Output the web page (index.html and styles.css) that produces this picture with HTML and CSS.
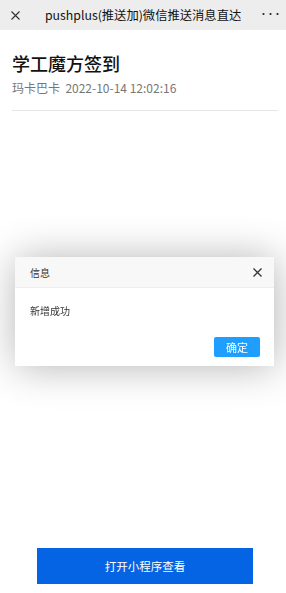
FILE: index.html
```html
<!DOCTYPE html>
<html lang="zh">
<head>
<meta charset="utf-8">
<title>pushplus</title>
<link rel="stylesheet" href="styles.css">
</head>
<body>
<div class="page">
  <header class="topbar">
    <svg class="close-icon" width="9" height="9" viewBox="0 0 9 9"><path d="M0.5 0.5L8.5 8.5M8.5 0.5L0.5 8.5" stroke="#333" stroke-width="1.1" fill="none"/></svg>
    <div class="topbar-title">pushplus(推送加)微信推送消息直达</div>
    <svg class="more-icon" width="17" height="4" viewBox="0 0 17 4"><circle cx="1.5" cy="2" r="1.1" fill="#222"/><circle cx="8.5" cy="2" r="1.1" fill="#222"/><circle cx="15.5" cy="2" r="1.1" fill="#222"/></svg>
  </header>
  <main class="article">
    <h1 class="article-title">学工魔方签到</h1>
    <div class="article-meta">玛卡巴卡&nbsp;&nbsp;2022-10-14 12:02:16</div>
    <hr class="divider">
  </main>
  <button class="open-btn">打开小程序查看</button>
</div>

<div class="layer">
  <div class="layer-head">
    <span class="layer-title">信息</span>
    <svg class="layer-close" width="9" height="9" viewBox="0 0 9 9"><path d="M0.5 0.5L8.5 8.5M8.5 0.5L0.5 8.5" stroke="#333" stroke-width="1.3" fill="none"/></svg>
  </div>
  <div class="layer-body">新增成功</div>
  <div class="layer-actions"><span class="layer-btn">确定</span></div>
</div>
</body>
</html>
```

FILE: styles.css
```css
html, body {
  margin: 0;
  padding: 0;
  background: #fff;
}
body {
  font-family: "Noto Sans CJK SC", "Noto Sans", sans-serif;
  color: #111;
}
.page {
  height: 593px;
  display: flex;
  flex-direction: column;
}
.topbar {
  height: 30px;
  background: #ededed;
  display: flex;
  align-items: center;
  padding: 0 7px 0 11px;
  flex-shrink: 0;
}
.close-icon {
  display: block;
}
.topbar-title {
  flex: 1;
  margin-left: 25px;
  font-size: 12.3px;
  line-height: 16px;
  color: #111;
  white-space: nowrap;
}
.more-icon {
  display: block;
  margin-top: -2px;
}
.article {
  padding: 0 8px 0 12px;
}
.article-title {
  margin: 21px 0 0;
  font-size: 18px;
  line-height: 24px;
  font-weight: 500;
  color: #111;
}
.article-meta {
  margin-top: 5px;
  font-size: 12px;
  line-height: 16px;
  color: #777;
}
.divider {
  margin: 14px 0 0;
  border: 0;
  height: 1px;
  background: #e6e6e6;
}
.open-btn {
  margin: auto 0 9px 37px;
  width: 216px;
  height: 36px;
  border: 0;
  border-radius: 0;
  background: #0564e3;
  color: #fff;
  font-family: "Noto Sans CJK SC", sans-serif;
  font-size: 11.5px;
  padding: 0;
}
.layer {
  position: fixed;
  left: 15px;
  top: 257px;
  width: 259px;
  height: 109px;
  background: #fff;
  box-shadow: 1px 1px 40px rgba(0, 0, 0, 0.3);
  display: flex;
  flex-direction: column;
}
.layer-head {
  height: 30px;
  background: #f8f8f8;
  border-bottom: 1px solid #eee;
  display: flex;
  align-items: center;
  justify-content: space-between;
  padding: 0 12px 0 15px;
}
.layer-title {
  font-size: 10px;
  color: #333;
}
.layer-body {
  padding: 16px 15px 0;
  font-size: 10px;
  line-height: 14px;
  color: #333;
}
.layer-actions {
  margin-top: auto;
  display: flex;
  justify-content: flex-end;
  padding: 0 14px 9px;
}
.layer-btn {
  width: 46px;
  height: 20px;
  line-height: 20px;
  text-align: center;
  background: #1e9fff;
  color: #fff;
  border-radius: 2px;
  font-size: 11px;
}
```
